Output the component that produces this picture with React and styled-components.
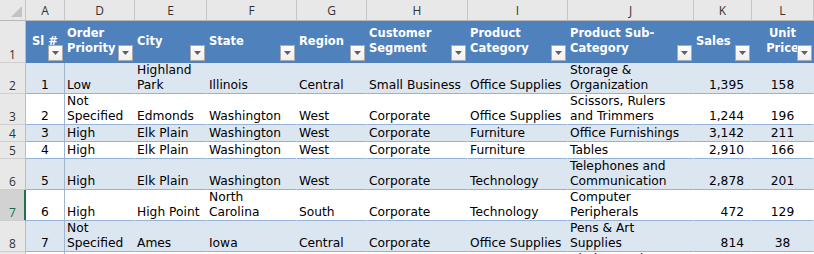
import React from 'react';
import styled, { createGlobalStyle } from 'styled-components';

const GlobalStyle = createGlobalStyle`
  html, body { margin: 0; padding: 0; background: #ffffff; overflow: hidden; }
  #root { width: 814px; height: 254px; overflow: hidden; }
`;

const COLS = '26px 39px 70px 72px 90px 70px 101px 100px 126px 58px 62px';

const Sheet = styled.div`
  width: 814px;
  height: 254px;
  overflow: hidden;
  font-family: "DejaVu Sans", Verdana, sans-serif;
`;

const Row = styled.div`
  display: grid;
  grid-template-columns: ${COLS};
  height: ${(p) => p.$h}px;
`;

const Corner = styled.div`
  background: #e8e8e8;
  border-right: 1px solid #c6c6c6;
  border-bottom: 1px solid #b8b8b8;
  display: flex;
  align-items: flex-end;
  justify-content: flex-end;
  padding: 0 3px 3px 0;
  box-sizing: border-box;
`;

const ColLetter = styled.div`
  background: #e8e8e8;
  border-right: 1px solid #c6c6c6;
  border-bottom: 1px solid #b8b8b8;
  box-sizing: border-box;
  display: flex;
  align-items: center;
  justify-content: center;
  font-family: "Open Sans", "Liberation Sans", sans-serif;
  font-size: 12px;
  color: #333333;
  padding-top: 1px;
`;

const RowNum = styled.div`
  background: ${(p) => (p.$sel ? '#d2d2d2' : '#e8e8e8')};
  border-right: 1px solid ${(p) => (p.$sel ? '#217346' : '#bcbcbc')};
  box-shadow: ${(p) => (p.$sel ? 'inset -1px 0 0 #217346' : 'none')};
  border-bottom: 1px solid #cfcfcf;
  box-sizing: border-box;
  display: flex;
  align-items: flex-end;
  justify-content: center;
  font-family: "Open Sans", "Liberation Sans", sans-serif;
  font-size: 12px;
  line-height: 15px;
  color: ${(p) => (p.$sel ? '#1d6a3e' : '#333333')};
  overflow: hidden;
`;

const HeadCell = styled.div`
  position: relative;
  background: #4f81bd;
  border-right: 1px solid #4f81bd;
  border-bottom: 1px solid #4f81bd;
  box-sizing: border-box;
  display: flex;
  align-items: center;
  justify-content: ${(p) => (p.$align === 'center' ? 'center' : 'flex-start')};
  text-align: ${(p) => p.$align || 'left'};
  padding: 0 2px 1px 2px;
  color: #ffffff;
  font-weight: bold;
  font-size: 11.5px;
  line-height: 15px;
  white-space: nowrap;
  overflow: hidden;
`;

const FilterBtn = styled.span`
  position: absolute;
  right: 1px;
  bottom: 1px;
  width: 15px;
  height: 16px;
  box-sizing: border-box;
  background: linear-gradient(#ffffff, #efefef);
  border: 1px solid #ababab;
  display: flex;
  align-items: center;
  justify-content: center;
  z-index: 1;
`;

const DataCell = styled.div`
  background: ${(p) => (p.$band ? '#dce6f1' : '#ffffff')};
  border-bottom: 1px solid #95b3d7;
  border-right: 1px solid ${(p) => (p.$sep ? '#a3b5cd' : p.$band ? '#dce6f1' : '#ffffff')};
  box-sizing: border-box;
  display: flex;
  flex-direction: column;
  justify-content: ${(p) => (p.$top ? 'flex-start' : 'flex-end')};
  align-items: ${(p) =>
    p.$align === 'center' ? 'center' : p.$align === 'right' ? 'flex-end' : 'flex-start'};
  padding: 0 ${(p) => (p.$align === 'right' ? '7px' : '2px')} 0 2px;
  font-size: 12.25px;
  line-height: 15px;
  color: #000000;
  white-space: nowrap;
  overflow: hidden;
`;

const Line = styled.span`
  display: block;
`;

const letters = ['A', 'D', 'E', 'F', 'G', 'H', 'I', 'J', 'K', 'L'];

const headers = [
  { t: ['Sl #'], align: 'center' },
  { t: ['Order', 'Priority'] },
  { t: ['City'] },
  { t: ['State'] },
  { t: ['Region'] },
  { t: ['Customer', 'Segment'] },
  { t: ['Product', 'Category'] },
  { t: ['Product Sub-', 'Category'] },
  { t: ['Sales'] },
  { t: ['Unit', 'Price'], align: 'center' },
];

const aligns = ['center', 'left', 'left', 'left', 'left', 'left', 'left', 'left', 'right', 'center'];

const rows = [
  { n: 2, h: 31, cells: ['1', 'Low', ['Highland', 'Park'], 'Illinois', 'Central', 'Small Business', 'Office Supplies', ['Storage &', 'Organization'], '1,395', '158'] },
  { n: 3, h: 31, cells: ['2', ['Not', 'Specified'], 'Edmonds', 'Washington', 'West', 'Corporate', 'Office Supplies', ['Scissors, Rulers', 'and Trimmers'], '1,244', '196'] },
  { n: 4, h: 17, cells: ['3', 'High', 'Elk Plain', 'Washington', 'West', 'Corporate', 'Furniture', 'Office Furnishings', '3,142', '211'] },
  { n: 5, h: 17, cells: ['4', 'High', 'Elk Plain', 'Washington', 'West', 'Corporate', 'Furniture', 'Tables', '2,910', '166'] },
  { n: 6, h: 31, cells: ['5', 'High', 'Elk Plain', 'Washington', 'West', 'Corporate', 'Technology', ['Telephones and', 'Communication'], '2,878', '201'] },
  { n: 7, h: 31, sel: true, cells: ['6', 'High', 'High Point', ['North', 'Carolina'], 'South', 'Corporate', 'Technology', ['Computer', 'Peripherals'], '472', '129'] },
  { n: 8, h: 31, cells: ['7', ['Not', 'Specified'], 'Ames', 'Iowa', 'Central', 'Corporate', 'Office Supplies', ['Pens & Art', 'Supplies'], '814', '38'] },
];

const FilterArrow = () => (
  <svg width="7" height="4" viewBox="0 0 7 4">
    <path d="M0 0 H7 L3.5 4 Z" fill="#5f5f5f" />
  </svg>
);

const CornerMark = () => (
  <svg width="11" height="11" viewBox="0 0 11 11">
    <path d="M11 0 V11 H0 Z" fill="#c3c3c3" />
  </svg>
);

const lines = (v) => (Array.isArray(v) ? v : [v]).map((l, i) => <Line key={i}>{l}</Line>);

export default function App() {
  return (
    <>
      <GlobalStyle />
      <Sheet>
        <Row $h={21}>
          <Corner>
            <CornerMark />
          </Corner>
          {letters.map((l) => (
            <ColLetter key={l}>{l}</ColLetter>
          ))}
        </Row>
        <Row $h={42}>
          <RowNum>1</RowNum>
          {headers.map((h, i) => (
            <HeadCell key={i} $align={h.align}>
              <div>{lines(h.t)}</div>
              <FilterBtn>
                <FilterArrow />
              </FilterBtn>
            </HeadCell>
          ))}
        </Row>
        {rows.map((r) => {
          const band = r.n % 2 === 0;
          return (
            <Row key={r.n} $h={r.h}>
              <RowNum $sel={r.sel}>{r.n}</RowNum>
              {r.cells.map((c, i) => (
                <DataCell key={i} $band={band} $sep={i === 0} $align={aligns[i]}>
                  {lines(c)}
                </DataCell>
              ))}
            </Row>
          );
        })}
        <Row $h={47}>
          <RowNum />
          {aligns.map((a, i) => (
            <DataCell key={i} $sep={i === 0} $align={a} $top>
              {i === 7 ? <Line>Binders and</Line> : null}
            </DataCell>
          ))}
        </Row>
      </Sheet>
    </>
  );
}
